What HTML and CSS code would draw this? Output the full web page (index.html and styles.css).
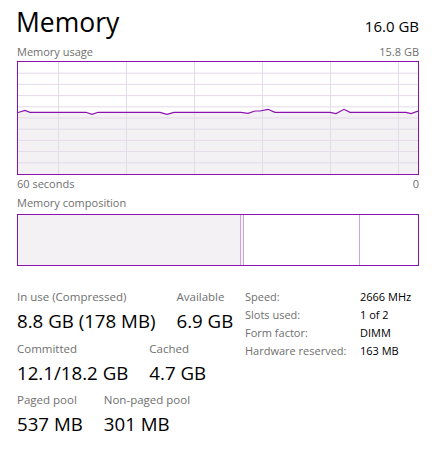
FILE: index.html
```html
<!DOCTYPE html>
<html>
<head>
<meta charset="utf-8">
<link rel="stylesheet" href="styles.css">
</head>
<body>
<div class="page">
  <div class="header">
    <div class="title">Memory</div>
    <div class="total">16.0 GB</div>
  </div>
  <div class="caption caption-top"><span>Memory usage</span><span>15.8 GB</span></div>
  <div class="graph">
    <svg width="400" height="112" viewBox="0 0 400 112">
      <path class="fill" d="M0,50.5 L7,48.5 L12,50.3 L68,50.3 L74,52.3 L80,50.3 L142,50.3 L149,52.3 L156,50.3 L223,50.3 L230,51.3 L237,49 L242,49 L250,47.3 L257,50.3 L312,50.3 L318,51.5 L326,47.3 L332,50.3 L388,50.3 L393,51.5 L400,49 L400,112 L0,112 Z"/>
      <g class="grid">
        <line x1="0" y1="11.2" x2="400" y2="11.2"/>
        <line x1="0" y1="22.4" x2="400" y2="22.4"/>
        <line x1="0" y1="33.6" x2="400" y2="33.6"/>
        <line x1="0" y1="44.8" x2="400" y2="44.8"/>
        <line x1="0" y1="56" x2="400" y2="56"/>
        <line x1="0" y1="67.2" x2="400" y2="67.2"/>
        <line x1="0" y1="78.4" x2="400" y2="78.4"/>
        <line x1="0" y1="89.6" x2="400" y2="89.6"/>
        <line x1="0" y1="100.8" x2="400" y2="100.8"/>
        <line x1="40.5" y1="0" x2="40.5" y2="112"/>
        <line x1="108.5" y1="0" x2="108.5" y2="112"/>
        <line x1="176.5" y1="0" x2="176.5" y2="112"/>
        <line x1="244.5" y1="0" x2="244.5" y2="112"/>
        <line x1="312.5" y1="0" x2="312.5" y2="112"/>
        <line x1="380.5" y1="0" x2="380.5" y2="112"/>
      </g>
      <path class="line" d="M0,50.5 L7,48.5 L12,50.3 L68,50.3 L74,52.3 L80,50.3 L142,50.3 L149,52.3 L156,50.3 L223,50.3 L230,51.3 L237,49 L242,49 L250,47.3 L257,50.3 L312,50.3 L318,51.5 L326,47.3 L332,50.3 L388,50.3 L393,51.5 L400,49"/>
    </svg>
  </div>
  <div class="caption caption-axis"><span>60 seconds</span><span>0</span></div>
  <div class="caption caption-comp"><span>Memory composition</span></div>
  <div class="comp">
    <div class="seg seg-used" style="width:222px"></div>
    <div class="seg seg-mod" style="width:2px"></div>
    <div class="seg seg-standby" style="width:115px"></div>
    <div class="seg seg-free"></div>
  </div>
  <div class="stats">
    <div class="stats-left">
      <div class="stat-row">
        <div class="stat"><div class="label">In use (Compressed)</div><div class="value">8.8 GB (178 MB)</div></div>
        <div class="stat"><div class="label">Available</div><div class="value">6.9 GB</div></div>
      </div>
      <div class="stat-row">
        <div class="stat"><div class="label">Committed</div><div class="value">12.1/18.2 GB</div></div>
        <div class="stat"><div class="label">Cached</div><div class="value">4.7 GB</div></div>
      </div>
      <div class="stat-row">
        <div class="stat"><div class="label">Paged pool</div><div class="value">537 MB</div></div>
        <div class="stat"><div class="label">Non-paged pool</div><div class="value">301 MB</div></div>
      </div>
    </div>
    <div class="stats-right">
      <div class="kv"><span class="k">Speed:</span><span class="v">2666 MHz</span></div>
      <div class="kv"><span class="k">Slots used:</span><span class="v">1 of 2</span></div>
      <div class="kv"><span class="k">Form factor:</span><span class="v">DIMM</span></div>
      <div class="kv"><span class="k">Hardware reserved:</span><span class="v">163 MB</span></div>
    </div>
  </div>
</div>
</body>
</html>
```
FILE: styles.css
```css
html, body {
  margin: 0;
  padding: 0;
  background: #ffffff;
}
body {
  font-family: "Open Sans", "Noto Sans", sans-serif;
  color: #000000;
}
.page {
  width: 402px;
  padding: 0 19px 0 17px;
}
.header {
  height: 44px;
  box-sizing: border-box;
  padding-top: 4px;
  display: flex;
  justify-content: space-between;
  align-items: baseline;
}
.title {
  font-size: 26.5px;
  line-height: 36px;
  margin-left: -1px;
}
.total {
  font-size: 15px;
  line-height: 20px;
}
.caption {
  display: flex;
  justify-content: space-between;
  font-size: 11px;
  line-height: 16px;
  color: #6f6f6f;
}
.caption-top {
  height: 16px;
  margin-bottom: 1px;
}
.graph {
  width: 400px;
  height: 112px;
  border: 1px solid #8b12ae;
}
.graph svg {
  display: block;
}
.fill {
  fill: #f4f1f5;
}
.grid line {
  stroke: #e3dbe7;
  stroke-width: 1;
}
.line {
  fill: none;
  stroke: #8b12ae;
  stroke-width: 1.2;
}
.caption-axis {
  margin-top: 1px;
}
.caption-comp {
  margin-top: 3px;
}
.comp {
  margin-top: 3px;
  width: 400px;
  height: 50px;
  border: 1px solid #8b12ae;
  display: flex;
}
.seg {
  height: 100%;
}
.seg-used {
  background: #f4f1f5;
}
.seg-mod {
  background: #f4f1f5;
  border-left: 1px solid #cda6d9;
  border-right: 1px solid #cda6d9;
}
.seg-standby {
  border-right: 1px solid #cda6d9;
}
.seg-free {
  flex: 1;
}
.stats {
  margin-top: 23px;
  display: flex;
}
.stats-left {
  width: 228px;
  display: flex;
  flex-direction: column;
  gap: 3.5px;
}
.stat-row {
  display: flex;
  gap: 21px;
}
.label {
  font-size: 11.5px;
  line-height: 16px;
  color: #6f6f6f;
  white-space: nowrap;
}
.value {
  font-size: 18.7px;
  line-height: 32px;
  white-space: nowrap;
}
.stats-right {
  margin-top: -1px;
  font-size: 11px;
  line-height: 18px;
}
.kv {
  display: flex;
}
.k {
  width: 115px;
  color: #6f6f6f;
}
.v {
  color: #000000;
}
```
